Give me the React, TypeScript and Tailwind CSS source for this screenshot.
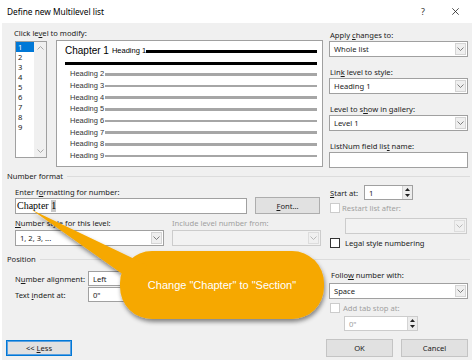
import React from "react";

const Chevron = ({ color = "#606060" }: { color?: string }) => (
  <svg width="7" height="4" viewBox="0 0 7 4">
    <path d="M0.5 0.5L3.5 3.5L6.5 0.5" fill="none" stroke={color} strokeWidth="0.9" />
  </svg>
);

const ChevronUp = ({ color = "#a0a0a0" }: { color?: string }) => (
  <svg width="7" height="4" viewBox="0 0 7 4">
    <path d="M0.5 3.5L3.5 0.5L6.5 3.5" fill="none" stroke={color} strokeWidth="0.9" />
  </svg>
);

function Select({ text, cls, disabled }: { text?: string; cls: string; disabled?: boolean }) {
  return (
    <div
      className={
        "flex h-[16px] border " +
        (disabled ? "border-[#cccccc] bg-[#f2f2f2] " : "border-[#a0a0a0] bg-white ") +
        cls
      }
    >
      <div className="flex flex-1 items-center pl-[4px]">{text}</div>
      <div
        className={
          "m-px flex w-[11px] items-center justify-center border " +
          (disabled ? "border-[#dddddd] bg-[#f0f0f0]" : "border-[#d4d4d4] bg-[#efefef]")
        }
      >
        <Chevron color={disabled ? "#b0b0b0" : "#707070"} />
      </div>
    </div>
  );
}

function Spinner({ text, cls, light }: { text: string; cls: string; light?: boolean }) {
  return (
    <div className={"flex h-[15px] border bg-white " + (light ? "border-[#cccccc] " : "border-[#a0a0a0] ") + cls}>
      <div className={"flex flex-1 items-center pl-[4px] " + (light ? "text-[#a0a0a0]" : "")}>{text}</div>
      <div className="flex w-[10px] flex-col border-l border-[#d4d4d4] bg-[#ececec]">
        <div className="flex flex-1 items-center justify-center">
          <svg width="5" height="3" viewBox="0 0 5 3">
            <path d="M0 3L2.5 0L5 3Z" fill="#222" />
          </svg>
        </div>
        <div className="flex flex-1 items-center justify-center">
          <svg width="5" height="3" viewBox="0 0 5 3">
            <path d="M0 0L2.5 3L5 0Z" fill="#222" />
          </svg>
        </div>
      </div>
    </div>
  );
}

function Check({ disabled }: { disabled?: boolean }) {
  return (
    <div
      className={
        "h-[10px] w-[10px] border bg-white " + (disabled ? "border-[#cccccc]" : "border-[#333333]")
      }
    />
  );
}

function GroupHeader({ label }: { label: string }) {
  return (
    <div className="flex h-[12px] items-center pl-[5px] pr-[2px]">
      <span>{label}</span>
      <div className="ml-[4px] h-px flex-1 bg-[#dcdcdc]" />
    </div>
  );
}

export default function App() {
  const levels = ["1", "2", "3", "4", "5", "6", "7", "8", "9"];
  const headings = [2, 3, 4, 5, 6, 7, 8, 9];
  return (
    <div className="relative h-[363px] w-[474px] overflow-hidden bg-white font-['Noto_Sans',sans-serif] text-[7.6px] leading-[12px] text-[#1b1b1b]">
      {/* Title bar */}
      <div className="flex h-[23px] items-center pl-[7px] pr-[15px] text-[8.3px] text-black">
        <span>Define new Multilevel list</span>
        <span className="ml-auto mr-[27px] text-[9px] text-[#333]">?</span>
        <svg width="7" height="7" viewBox="0 0 7 7">
          <path d="M0.3 0.3L6.7 6.7M6.7 0.3L0.3 6.7" stroke="#222" strokeWidth="0.8" />
        </svg>
      </div>

      {/* Body */}
      <div className="mx-[2px] flex h-[337px] flex-col bg-[#f0f0f0]">
        {/* Section A */}
        <div className="flex h-[147px]">
          <div className="ml-[12px] w-[309px] pt-[4px]">
            <div className="h-[12px]">
              Click le<u>v</u>el to modify:
            </div>
            <div className="mt-px flex items-start">
              {/* listbox */}
              <div className="ml-px mt-px flex h-[117px] w-[32px] border border-[#a0a0a0] bg-white">
                <div className="w-[18px]">
                  {levels.map((l, i) => (
                    <div
                      key={l}
                      className={
                        "flex h-[10px] items-center pl-[2px] leading-[10px] " +
                        (i === 0 ? "bg-[#0078d7] text-white" : "")
                      }
                    >
                      {l}
                    </div>
                  ))}
                </div>
                <div className="flex flex-1 flex-col items-center justify-between bg-[#f0f0f0] py-[4px]">
                  <ChevronUp />
                  <Chevron color="#a0a0a0" />
                </div>
              </div>
              {/* preview */}
              <div className="ml-[9px] h-[127px] w-[267px] border border-[#a0a0a0] bg-white pl-[8px] pr-[5px] pt-[4px] font-['Liberation_Sans',Arial,sans-serif] text-black">
                <div className="flex h-[12px] items-center">
                  <span className="text-[10px] leading-[12px]">Chapter 1</span>
                  <span className="ml-[3px] text-[7.5px] leading-[10px]">Heading 1</span>
                  <div className="h-[3px] flex-1 bg-black" />
                </div>
                <div className="mt-[4.5px] h-[3px] bg-black" />
                <div className="mt-[4px]">
                  {headings.map((h) => (
                    <div key={h} className="flex h-[11.67px] items-center pl-[5px]">
                      <span className="text-[7.5px] leading-[10px] text-[#333]">Heading {h}</span>
                      <div className="ml-px h-[2.5px] flex-1 bg-[#a6a6a6]" />
                    </div>
                  ))}
                </div>
              </div>
            </div>
          </div>
          <div className="ml-[6px] w-[139px] pt-[6px]">
            <div className="h-[12px] pl-px">
              Apply <u>c</u>hanges to:
            </div>
            <Select text="Whole list" cls="w-[139px]" />
            <div className="mt-[9px] h-[12px] pl-px">
              Lin<u>k</u> level to style:
            </div>
            <Select text="Heading 1" cls="w-[139px]" />
            <div className="mt-[9px] h-[12px] pl-px">
              Level to s<u>h</u>ow in gallery:
            </div>
            <Select text="Level 1" cls="w-[139px]" />
            <div className="mt-[9px] h-[12px] pl-px">
              ListNum field lis<u>t</u> name:
            </div>
            <div className="h-[16px] w-[139px] border border-[#a0a0a0] bg-white" />
          </div>
        </div>

        <GroupHeader label="Number format" />

        {/* Section B */}
        <div className="flex h-[71px]">
          <div className="ml-[13px] w-[306px] pt-[4px]">
            <div className="h-[12px]">
              Enter f<u>o</u>rmatting for number:
            </div>
            <div className="flex h-[16px] items-end">
              <div className="flex h-[16px] w-[232px] items-center border border-[#a0a0a0] bg-white pl-px font-['Liberation_Serif',serif] text-[10px] text-black">
                Chapter&nbsp;<span className="bg-[#c8c8c8]">1</span>
              </div>
              <div className="ml-[8px] flex h-[17px] w-[65px] items-center justify-center border border-[#adadad] bg-[#e1e1e1]">
                <span>
                  <u>F</u>ont...
                </span>
              </div>
            </div>
            <div className="mt-[3px] grid grid-cols-[149px_149px] gap-x-[8px]">
              <div className="h-[12px]">
                <u>N</u>umber style for this level:
              </div>
              <div className="h-[12px] text-[#a0a0a0]">Include level number from:</div>
              <Select text="1, 2, 3, ..." cls="mt-px w-[149px]" />
              <Select disabled cls="mt-px w-[149px]" />
            </div>
          </div>
          <div className="ml-[8px] w-[139px] pl-px">
            <div className="mt-[3px] flex h-[15px] items-center">
              <span className="w-[34px]">
                <u>S</u>tart at:
              </span>
              <Spinner text="1" cls="w-[49px]" />
            </div>
            <div className="mt-[3px] flex h-[10px] items-center">
              <Check disabled />
              <span className="ml-[2px] text-[#a0a0a0]">Restart list after:</span>
            </div>
            <Select disabled cls="ml-[15px] mt-[5px] w-[122px]" />
            <div className="mt-[4px] flex h-[10px] items-center">
              <Check />
              <span className="ml-[5px]">
                Le<u>g</u>al style numbering
              </span>
            </div>
          </div>
        </div>

        <GroupHeader label="Position" />

        {/* Section C */}
        <div className="flex h-[74px]">
          <div className="ml-[13px] w-[306px] pt-[6px]">
            <div className="flex h-[15px] items-center">
              <span className="w-[73px]">
                N<u>u</u>mber alignment:
              </span>
              <div className="flex h-[15px] w-[120px] items-center border border-[#a0a0a0] bg-white pl-[4px]">
                Left
              </div>
            </div>
            <div className="mt-px flex h-[15px] items-center">
              <span className="w-[73px]">
                Text <u>i</u>ndent at:
              </span>
              <div className="flex h-[15px] w-[90px] items-center border border-[#a0a0a0] bg-white pl-[4px]">
                0"
              </div>
            </div>
          </div>
          <div className="ml-[8px] w-[139px] pt-[4px]">
            <div className="h-[12px] pl-[2px]">
              Follo<u>w</u> number with:
            </div>
            <Select text="Space" cls="mt-[2px] w-[139px]" />
            <div className="mt-[4px] flex h-[10px] items-center pl-[1px]">
              <Check disabled />
              <span className="ml-[3px] text-[#a0a0a0]">Add tab stop at:</span>
            </div>
            <Spinner text={'0"'} light cls="ml-[15px] mt-[3px] w-[74px]" />
          </div>
        </div>

        {/* Buttons */}
        <div className="flex h-[18px] items-center px-[4px]">
          <div className="flex h-[16px] w-[66px] items-center justify-center border border-[#0078d7] bg-[#e1e1e1] ring-1 ring-inset ring-[#5aa0e0]">
            <span>
              &lt;&lt; <u>L</u>ess
            </span>
          </div>
          <div className="ml-auto flex h-[18px] w-[67px] items-center justify-center border border-[#c4c4c4] bg-[#e1e1e1]">
            OK
          </div>
          <div className="ml-[8px] flex h-[18px] w-[67px] items-center justify-center border border-[#c4c4c4] bg-[#e1e1e1]">
            Cancel
          </div>
        </div>
      </div>

      {/* Callout overlay */}
      <svg
        className="pointer-events-none absolute left-0 top-0"
        width="474"
        height="363"
        viewBox="0 0 474 363"
      >
        <defs>
          <filter id="sh" x="-20%" y="-20%" width="140%" height="160%">
            <feDropShadow dx="1" dy="3" stdDeviation="2" floodColor="#000" floodOpacity="0.45" />
          </filter>
        </defs>
        <g filter="url(#sh)" fill="#f6a800">
          <rect x="120" y="251" width="204" height="68" rx="32" />
          <polygon points="32,210 147,265 138,285" />
        </g>
      </svg>
      <div className="pointer-events-none absolute left-[120px] top-[251px] flex h-[68px] w-[204px] items-center justify-center font-['Liberation_Sans',Arial,sans-serif] text-[11px] text-white">
        Change "Chapter" to "Section"
      </div>
    </div>
  );
}
